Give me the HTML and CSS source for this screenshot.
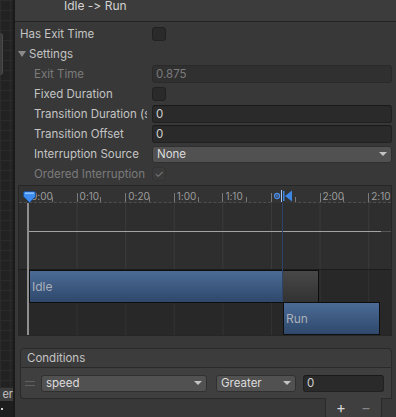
FILE: index.html
```html
<!DOCTYPE html>
<html lang="en">

<head>
    <meta charset="UTF-8">
    <meta name="viewport" content="width=device-width">
    <title>Idle -> Run</title>
    <link rel="stylesheet" href="styles.css">
</head>

<body>
    <div class="dock">
        <aside class="side">
            <div class="side-knob"></div>
            <div class="side-fill"></div>
            <div class="side-tab">er</div>
            <div class="side-foot"><span class="side-dot"></span></div>
        </aside>

        <main class="inspector">
            <div class="title">Idle -&gt; Run</div>

            <div class="props">
                <div class="row">
                    <span class="label">Has Exit Time</span>
                    <span class="check"></span>
                </div>
                <div class="row">
                    <span class="label foldout"><span class="tri"></span>Settings</span>
                </div>
                <div class="row sub disabled">
                    <span class="label">Exit Time</span>
                    <span class="field">0.875</span>
                </div>
                <div class="row sub">
                    <span class="label">Fixed Duration</span>
                    <span class="check"></span>
                </div>
                <div class="row sub">
                    <span class="label">Transition Duration (s)</span>
                    <span class="field">0</span>
                </div>
                <div class="row sub">
                    <span class="label">Transition Offset</span>
                    <span class="field">0</span>
                </div>
                <div class="row sub">
                    <span class="label">Interruption Source</span>
                    <span class="select">None<span class="arrow"></span></span>
                </div>
                <div class="row sub disabled">
                    <span class="label">Ordered Interruption</span>
                    <span class="check checked">&#10003;</span>
                </div>
            </div>

            <div class="timeline">
                <div class="ruler">
                    <span class="tick">0:00</span>
                    <span class="tick">0:10</span>
                    <span class="tick">0:20</span>
                    <span class="tick">1:00</span>
                    <span class="tick">1:10</span>
                    <span class="tick">1:20</span>
                    <span class="tick">2:00</span>
                    <span class="tick">2:10</span>
                </div>
                <div class="tracks">
                    <div class="curve">
                        <div class="curve-line"><span class="curve-on"></span><span class="curve-off"></span></div>
                    </div>
                    <div class="bars">
                        <div class="bar bar-idle">
                            <span class="bar-blue">Idle</span>
                            <span class="bar-exit"></span>
                        </div>
                        <div class="bar bar-run">
                            <span class="bar-blue">Run</span>
                        </div>
                    </div>
                    <span class="playhead"></span>
                    <span class="trans-line"></span>
                </div>

                <svg class="play-marker" width="13" height="12" viewBox="0 0 13 12">
                    <path d="M2 0.5 H11 Q12.5 0.5 12.5 2 V5.5 L6.5 11.5 L0.5 5.5 V2 Q0.5 0.5 2 0.5 Z" fill="#3f8cf0" stroke="#1d4f98" />
                    <path d="M2 1.5 H11 V3 H2 Z" fill="#8dc0ff" />
                </svg>
                <svg class="trans-marker" width="22" height="14" viewBox="0 0 22 14">
                    <rect x="0" y="0" width="22" height="14" fill="#333" />
                    <circle cx="4" cy="7" r="2.5" fill="none" stroke="#4a8ee8" stroke-width="1.3" />
                    <circle cx="4" cy="7" r="0.9" fill="#4a8ee8" />
                    <rect x="8" y="1" width="1" height="12" fill="#9fc4f5" />
                    <rect x="10" y="2" width="1.5" height="10" fill="#3d86e6" />
                    <path d="M19 1.5 L12 7 L19 12.5 Z" fill="#3d86e6" />
                </svg>
            </div>

            <div class="conditions">
                <div class="cond-head">Conditions</div>
                <div class="cond-body">
                    <span class="handle"></span>
                    <span class="select cond-param">speed<span class="arrow"></span></span>
                    <span class="select cond-mode">Greater<span class="arrow"></span></span>
                    <span class="field cond-value">0</span>
                </div>
                <div class="cond-foot">
                    <span class="plus">+</span>
                    <span class="minus">&minus;</span>
                </div>
            </div>
        </main>
    </div>
</body>

</html>
```

FILE: styles.css
```css
* {
    box-sizing: border-box;
}

body {
    margin: 0;
    background-color: #383838;
    font-family: 'Inter', 'Noto Sans', sans-serif;
    font-size: 11.5px;
    font-feature-settings: "calt" 0;
    color: #c4c4c4;
}

.dock {
    display: flex;
    height: 417px;
    overflow: hidden;
}

/* left dock strip */
.side {
    width: 15px;
    flex: none;
    display: flex;
    flex-direction: column;
    border-right: 2px solid #1a1a1a;
    background-color: #222;
    background-image:
        linear-gradient(to bottom, #2b2b2b 1px, transparent 1px),
        linear-gradient(to right, #2b2b2b 1px, transparent 1px);
    background-size: 10px 10px;
}

.side-knob {
    margin-top: 33px;
    width: 3px;
    height: 42px;
    background-color: #3b3b3b;
    border-radius: 0 3px 3px 0;
    border-right: 1px solid #4a4a4a;
}

.side-fill {
    flex: 1;
}

.side-tab {
    height: 14px;
    background-color: #3c3c3c;
    border-top: 1px solid #2a2a2a;
    font-size: 11px;
    line-height: 13px;
    text-align: right;
    color: #c4c4c4;
}

.side-foot {
    height: 16px;
    background-color: #1e1e1e;
    padding: 7px 0 0 1px;
}

.side-dot {
    display: block;
    width: 2px;
    height: 2px;
    background-color: #d0d0d0;
}

/* inspector */
.inspector {
    flex: 1;
    min-width: 0;
    display: flex;
    flex-direction: column;
}

.title {
    height: 22px;
    flex: none;
    background-color: #3c3c3c;
    border-bottom: 1px solid #232323;
    padding-left: 49px;
    line-height: 11px;
    font-size: 12px;
    color: #d2d2d2;
}

.props {
    padding: 2px 4px 0 5px;
}

.row {
    display: flex;
    align-items: center;
    height: 20px;
}

.label {
    width: 127px;
    margin-right: 5px;
    flex: none;
    white-space: nowrap;
    overflow: hidden;
}

.sub .label {
    padding-left: 14px;
}

.foldout {
    display: flex;
    align-items: center;
    padding-left: 0;
    margin-left: -2px;
}

.tri {
    width: 0;
    height: 0;
    border-left: 4px solid transparent;
    border-right: 4px solid transparent;
    border-top: 6px solid #8a8a8a;
    margin-right: 3px;
}

.check {
    width: 14px;
    height: 14px;
    background-color: #2a2a2a;
    border: 1px solid #212121;
    border-radius: 3px;
}

.check.checked {
    background-color: #3a3a3a;
    border-color: #333;
    color: #7a7a7a;
    font-size: 11px;
    line-height: 12px;
    text-align: center;
}

.field {
    flex: 1;
    height: 18px;
    background-color: #2a2a2a;
    border: 1px solid #212121;
    border-top-color: #191919;
    border-radius: 3px;
    padding: 0 3px;
    line-height: 16px;
    color: #d2d2d2;
}

.disabled {
    color: #7b7b7b;
}

.disabled .field {
    background-color: #303030;
    border-color: #2a2a2a;
    color: #7b7b7b;
}

.select {
    flex: 1;
    height: 17px;
    display: flex;
    align-items: center;
    justify-content: space-between;
    padding: 0 4px;
    background-color: #515151;
    border: 1px solid #303030;
    border-radius: 3px;
    color: #dcdcdc;
}

.arrow {
    width: 0;
    height: 0;
    border-left: 4px solid transparent;
    border-right: 4px solid transparent;
    border-top: 4px solid #c4c4c4;
}

/* timeline */
.timeline {
    position: relative;
    margin: 1px 4px 0 3px;
    border: 1px solid #262626;
    background-color: #2d2d2d;
}

.ruler {
    display: flex;
    height: 17px;
    padding-left: 9px;
    overflow: hidden;
    background-color: #333;
    border-bottom: 1px dashed #4e4e4e;
}

.tick {
    flex: 0 0 48.6px;
    padding: 4px 0 0 3px;
    font-size: 10px;
    line-height: 12px;
    color: #9c9c9c;
    background:
        linear-gradient(#7a7a7a, #7a7a7a) 0 100% / 1px 9px no-repeat,
        linear-gradient(#7a7a7a, #7a7a7a) 50% 100% / 1px 5px no-repeat;
}

.tracks {
    position: relative;
}

.curve {
    height: 66px;
    padding-top: 28px;
    background-color: #2e2e2e;
    background-image: linear-gradient(to right, #3a3a3a 1px, transparent 1px);
    background-size: 48.6px 100%;
    background-position: 9px 0;
}

.curve-line {
    display: flex;
    margin-left: 9px;
    height: 1px;
}

.curve-on {
    width: 353px;
    background-color: #a3a3a3;
}

.curve-off {
    flex: 1;
    background-color: #555;
}

.bars {
    height: 66px;
    border-top: 1px solid #1c1c1c;
    background-color: #282828;
    background-image: linear-gradient(to right, #323232 1px, transparent 1px);
    background-size: 48.6px 100%;
    background-position: 9px 0;
}

.bar {
    display: flex;
    height: 33px;
    border: 1px solid #0e0e0e;
}

.bar-idle {
    margin-left: 10px;
    width: 290px;
}

.bar-run {
    margin-top: -1px;
    margin-left: 264px;
    width: 97px;
}

.bar-blue {
    flex: 1;
    padding-left: 2px;
    line-height: 31px;
    font-size: 12px;
    color: #a9afb8;
    background: linear-gradient(#4b6b96, #2f486b);
}

.bar-idle .bar-blue {
    flex: 0 0 253px;
}

.bar-exit {
    flex: 1;
    background: linear-gradient(#484848, #323232);
}

.playhead {
    position: absolute;
    left: 8px;
    top: 0;
    bottom: 0;
    width: 2px;
    background-color: #8e8e8e;
}

.trans-line {
    position: absolute;
    left: 263px;
    top: 0;
    height: 99px;
    width: 1px;
    background-color: #2c4468;
}

.play-marker {
    position: absolute;
    left: 4px;
    top: 5px;
}

.trans-marker {
    position: absolute;
    left: 254px;
    top: 3px;
}

/* conditions list */
.conditions {
    display: flex;
    flex-direction: column;
    margin: 12px 4px 0 5px;
}

.cond-head {
    height: 20px;
    padding-left: 6px;
    line-height: 18px;
    background-color: #3c3c3c;
    border: 1px solid #2a2a2a;
    border-radius: 4px 4px 0 0;
}

.cond-body {
    display: flex;
    align-items: center;
    height: 31px;
    padding: 0 7px 0 4px;
    background-color: #3f3f3f;
    border: 1px solid #2a2a2a;
    border-top: none;
    border-radius: 0 0 0 4px;
}

.handle {
    width: 10px;
    height: 5px;
    flex: none;
    border-top: 1px solid #5f5f5f;
    border-bottom: 1px solid #5f5f5f;
    margin-right: 6px;
}

.cond-param {
    flex: 0 0 166px;
    margin-right: 9px;
}

.cond-mode {
    flex: 0 0 80px;
    margin-right: 7px;
}

.cond-value {
    flex: 0 0 81px;
    height: 17px;
    line-height: 15px;
}

.cond-foot {
    align-self: flex-end;
    display: flex;
    gap: 13px;
    width: 57px;
    height: 21px;
    margin: -1px 10px 0 0;
    padding-left: 9px;
    background-color: #3f3f3f;
    border: 1px solid #2a2a2a;
    border-top: none;
    border-radius: 0 0 4px 4px;
    font-size: 15px;
    line-height: 19px;
}

.plus {
    width: 12px;
    text-align: center;
    color: #d6d6d6;
}

.minus {
    width: 12px;
    text-align: center;
    color: #858585;
}
```
